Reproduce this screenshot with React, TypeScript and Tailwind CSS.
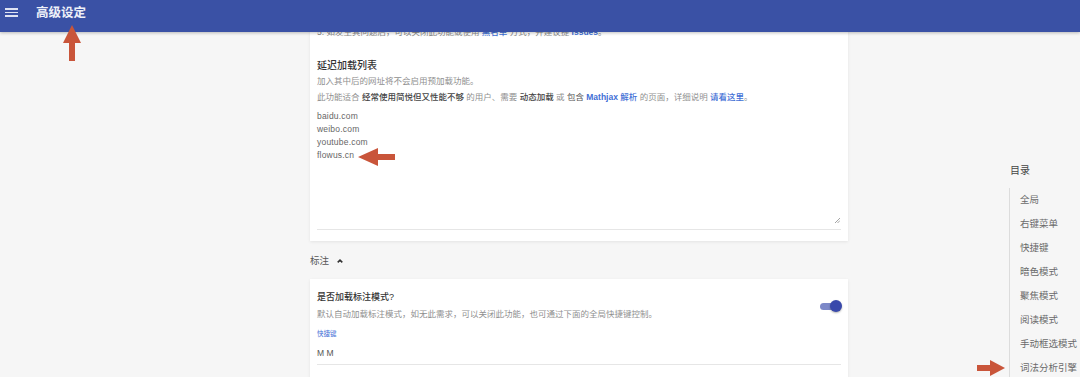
import React from "react";

const toc = ["全局", "右键菜单", "快捷键", "暗色模式", "聚焦模式", "阅读模式", "手动框选模式", "词法分析引擎"];

export default function App() {
  return (
    <div className="relative w-[1080px] h-[377px] overflow-hidden bg-[#f6f6f6] font-['Liberation_Sans','Noto_Sans_CJK_SC',sans-serif]">
      {/* Header overlays content */}
      <header className="absolute top-0 left-0 right-0 h-[32px] bg-[#3a51a5] z-10 shadow-[0_1px_3px_rgba(0,0,0,0.25)] flex items-start pt-[5px]">
        <div className="ml-[5px] mt-[3px] flex flex-col gap-[2px] w-[13px]">
          <span className="block h-[1.5px] bg-[#dfe3f3]" />
          <span className="block h-[1.5px] bg-[#dfe3f3]" />
          <span className="block h-[1.5px] bg-[#dfe3f3]" />
        </div>
        <h1 className="ml-[18px] text-[12.5px] leading-[16px] font-bold text-[#eef0f8]">高级设定</h1>
      </header>

      <div className="flex">
        <main className="ml-[310px] w-[538px] shrink-0">
          {/* Card 1 */}
          <section className="bg-white shadow-[0_1px_3px_rgba(0,0,0,0.08)] px-[7px] pt-[25px] pb-[11px]">
            <p className="text-[8.5px] leading-[14px] text-[#8a8a8a] whitespace-nowrap">
              5. 如发生其问题后，可以关闭此功能或使用 <span className="text-[#3f6fd6] font-medium">黑名单</span> 方式，并建议提 <span className="text-[#3f6fd6] font-semibold">issues</span>。
            </p>
            <h2 className="mt-[20px] text-[10px] leading-[14px] font-medium text-[#333]">延迟加载列表</h2>
            <p className="text-[8.5px] leading-[16px] text-[#8f8f8f]">加入其中后的网址将不会启用预加载功能。</p>
            <p className="text-[8.5px] leading-[16px] text-[#8f8f8f] whitespace-nowrap">
              此功能适合 <span className="text-[#444] font-medium">经常使用简悦但又性能不够</span> 的用户、需要 <span className="text-[#444] font-medium">动态加载</span> 或 <span className="text-[#555]">包含</span> <span className="text-[#3f6fd6] font-semibold">Mathjax</span> <span className="text-[#3f6fd6] font-medium">解析</span> 的页面，详细说明 <span className="text-[#3f6fd6] font-medium">请看这里</span>。
            </p>
            <div className="relative mt-[5px] h-[120px] border-b border-[#e6e6e6] text-[8.5px] leading-[13px] text-[#666] tracking-[0.2px]">
              <div>baidu.com</div>
              <div>weibo.com</div>
              <div>youtube.com</div>
              <div>flowus.cn</div>
              <svg className="absolute right-[1px] bottom-[6px]" width="6" height="6" viewBox="0 0 6 6">
                <path d="M1 6 L6 1 M3.5 6 L6 3.5" stroke="#9a9a9a" strokeWidth="0.9" />
              </svg>
            </div>
          </section>

          {/* Section heading */}
          <div className="mt-[13px] flex items-center h-[14px] text-[9.5px] text-[#555]">
            <span>标注</span>
            <svg className="ml-[8px]" width="6" height="4" viewBox="0 0 6 4">
              <path d="M0.7 3.4 L3 1.1 L5.3 3.4" stroke="#333" strokeWidth="1.5" fill="none" />
            </svg>
          </div>

          {/* Card 2 */}
          <section className="mt-[11px] bg-white shadow-[0_1px_3px_rgba(0,0,0,0.08)] px-[7px] pt-[11px] pb-[20px]">
            <div className="flex items-center">
              <div className="flex-1">
                <h3 className="text-[9px] leading-[14px] font-medium text-[#333]">是否加载标注模式?</h3>
                <p className="mt-[3px] text-[8.5px] leading-[14px] text-[#8f8f8f] whitespace-nowrap">默认自动加载标注模式，如无此需求，可以关闭此功能，也可通过下面的全局快捷键控制。</p>
              </div>
              <div className="relative w-[22px] h-[12px] mr-[-1px]">
                <div className="absolute left-0 top-[3px] w-[18px] h-[7px] rounded-full bg-[#7c88c8]" />
                <div className="absolute right-0 top-0 w-[12px] h-[12px] rounded-full bg-[#3949ab] shadow-[0_1px_2px_rgba(0,0,0,0.3)]" />
              </div>
            </div>
            <div className="mt-[8px] text-[6.5px] leading-[10px] text-[#3f6fd6]">快捷键</div>
            <div className="mt-[8px] text-[8.5px] leading-[12px] text-[#555] border-b border-[#e6e6e6] pb-[5px]">M M</div>
          </section>
        </main>

        {/* TOC */}
        <aside className="ml-[161px] pt-[164px]">
          <div className="ml-[1px] text-[10px] leading-[14px] text-[#444]">目录</div>
          <ul className="mt-[10px] border-l border-[#dcdcdc]">
            {toc.map((t) => (
              <li key={t} className="h-[24px] flex items-center pl-[10px] text-[9.5px] text-[#6a6a6a] whitespace-nowrap">
                {t}
              </li>
            ))}
          </ul>
        </aside>
      </div>

      {/* Annotation arrows */}
      <svg className="absolute left-[63px] top-[25px] z-20" width="18" height="36" viewBox="0 0 18 36">
        <polygon points="9,0 18,18 12,18 12,36 6,36 6,18 0,18" fill="#c9553a" />
      </svg>
      <svg className="absolute left-[358px] top-[148px]" width="37" height="18" viewBox="0 0 37 18">
        <polygon points="0,9 20,0 20,6 37,6 37,12 20,12 20,18" fill="#c9553a" />
      </svg>
      <svg className="absolute left-[977px] top-[360px]" width="28" height="16" viewBox="0 0 28 16">
        <polygon points="0,5 13,5 13,0 28,8 13,16 13,11 0,11" fill="#c9553a" />
      </svg>
    </div>
  );
}
